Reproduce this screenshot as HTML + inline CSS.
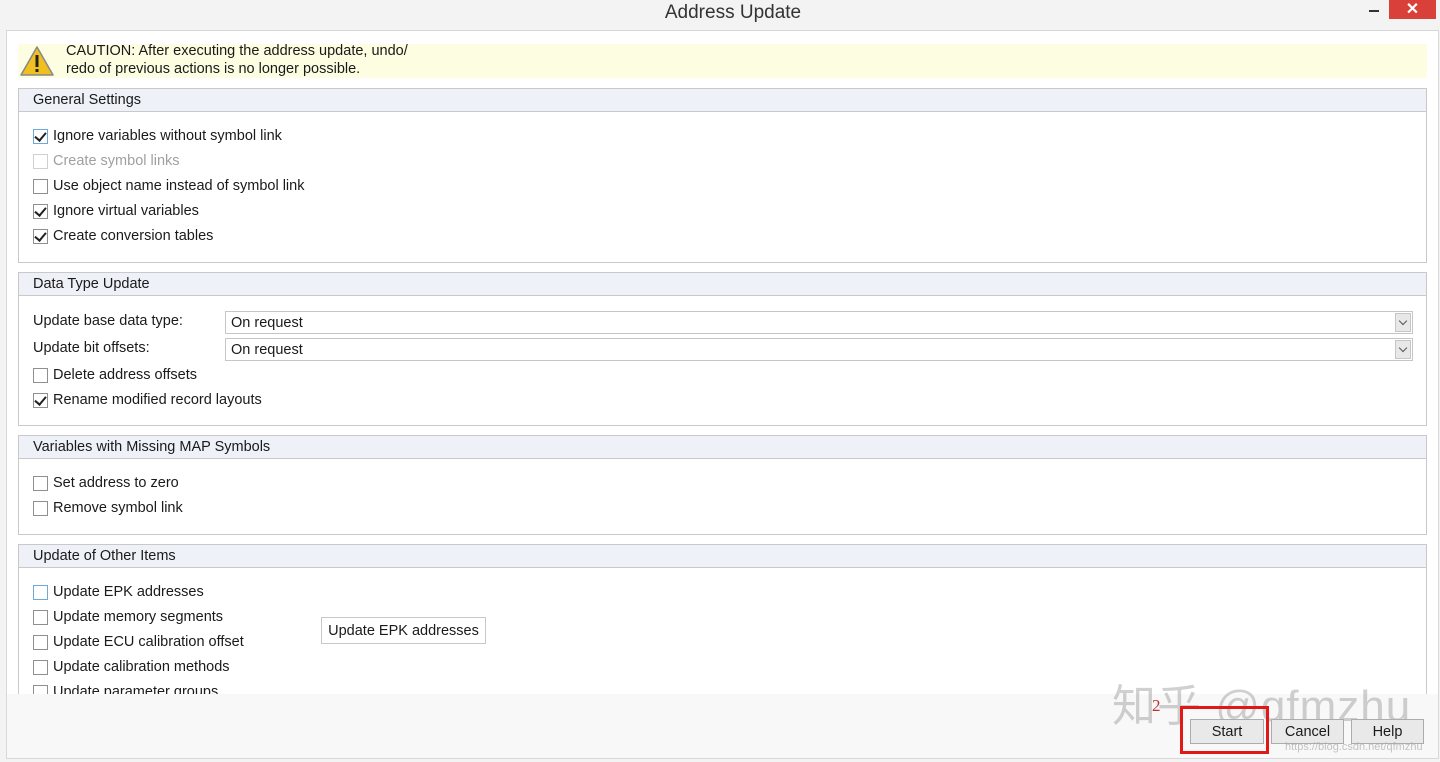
<!DOCTYPE html>
<html><head><style>
*{margin:0;padding:0;box-sizing:border-box}
body{width:1440px;height:762px;background:#f3f3f3;font-family:"Liberation Sans","Noto Sans CJK SC",sans-serif;font-size:14.5px;color:#1a1a1a;position:relative;overflow:hidden}
.a{position:absolute}
.title{left:0;width:1466px;top:2px;text-align:center;font-size:19px;color:#333}
.close{left:1389px;top:0;width:47px;height:19px;background:#d9403a;color:#fff;text-align:center;font-size:16px;line-height:19px;font-weight:bold}
.min{left:1369px;top:10px;width:10px;height:2px;background:#333}
.panel{left:6px;top:30px;width:1433px;height:729px;background:#fff;border:1px solid #d8d8d8}
.caution{left:18px;top:44px;width:1409px;height:34px;background:#fdfde2}
.grp{position:absolute;left:18px;width:1409px;border:1px solid #c9c9c9;background:#fff}
.gh{height:23px;background:#eef2f8;border-bottom:1px solid #c9c9c9;padding-left:14px;line-height:23px}
.cb{position:absolute;left:33px;width:15px;height:15px;border:1px solid #8f8f8f;background:#fff}
.cb.dis{border-color:#d0d0d0}
.cb.foc{border-color:#6fa8d6}
.lbl{position:absolute;left:53px;line-height:18px}
.chk::after{content:"";position:absolute;left:3px;top:0px;width:5px;height:9px;border:solid #222;border-width:0 2px 2px 0;transform:rotate(40deg)}
.sel{position:absolute;left:225px;width:1188px;height:23px;border:1px solid #c6c6c6;background:#fff;padding-left:5px;line-height:22px}
.sel .ar{position:absolute;right:1px;top:1px;width:16px;height:19px;background:#e8e8e8;border:1px solid #c6c6c6}
.sel .ar::after{content:"";position:absolute;left:4px;top:4px;width:5px;height:5px;border:solid #555;border-width:0 1.5px 1.5px 0;transform:rotate(45deg)}
.btn{position:absolute;height:25px;border:1px solid #acacac;background:#e9e9e9;text-align:center;line-height:24px}
.bottom{left:7px;top:694px;width:1431px;height:64px;background:#f8f8f8}
</style></head><body>
<div class="a title">Address Update</div>
<div class="a min"></div>
<div class="a close">✕</div>
<div class="a panel"></div>
<div class="a caution"></div>
<svg class="a" style="left:19px;top:44px" width="36" height="34" viewBox="0 0 36 34"><path d="M18 3 L34 31 L2 31 Z" fill="#f0c020" stroke="#888" stroke-width="1.5" stroke-linejoin="round"/><rect x="16.5" y="11" width="3" height="12" fill="#222"/><rect x="16.5" y="25" width="3" height="3" fill="#222"/></svg>
<div class="a" style="left:66px;top:42px;line-height:18px">CAUTION: After executing the address update, undo/<br>redo of previous actions is no longer possible.</div>

<div class="grp" style="top:88px;height:175px"><div class="gh">General Settings</div></div>
<div class="cb chk foc" style="top:129px"></div><div class="lbl" style="top:127px">Ignore variables without symbol link</div>
<div class="cb dis" style="top:154px"></div><div class="lbl" style="top:152px;color:#a0a0a0">Create symbol links</div>
<div class="cb" style="top:179px"></div><div class="lbl" style="top:177px">Use object name instead of symbol link</div>
<div class="cb chk" style="top:204px"></div><div class="lbl" style="top:202px">Ignore virtual variables</div>
<div class="cb chk" style="top:229px"></div><div class="lbl" style="top:227px">Create conversion tables</div>

<div class="grp" style="top:272px;height:154px"><div class="gh">Data Type Update</div></div>
<div class="lbl" style="left:33px;top:312px">Update base data type:</div>
<div class="sel" style="top:311px">On request<div class="ar"></div></div>
<div class="lbl" style="left:33px;top:339px">Update bit offsets:</div>
<div class="sel" style="top:338px">On request<div class="ar"></div></div>
<div class="cb" style="top:368px"></div><div class="lbl" style="top:366px">Delete address offsets</div>
<div class="cb chk" style="top:393px"></div><div class="lbl" style="top:391px">Rename modified record layouts</div>

<div class="grp" style="top:435px;height:100px"><div class="gh">Variables with Missing MAP Symbols</div></div>
<div class="cb" style="top:476px"></div><div class="lbl" style="top:474px">Set address to zero</div>
<div class="cb" style="top:501px"></div><div class="lbl" style="top:499px">Remove symbol link</div>

<div class="grp" style="top:544px;height:160px;border-bottom:none"><div class="gh">Update of Other Items</div></div>
<div class="cb foc" style="top:585px"></div><div class="lbl" style="top:583px">Update EPK addresses</div>
<div class="cb" style="top:610px"></div><div class="lbl" style="top:608px">Update memory segments</div>
<div class="cb" style="top:635px"></div><div class="lbl" style="top:633px">Update ECU calibration offset</div>
<div class="cb" style="top:660px"></div><div class="lbl" style="top:658px">Update calibration methods</div>
<div class="cb" style="top:685px"></div><div class="lbl" style="top:683px">Update parameter groups</div>
<div class="btn" style="left:321px;top:617px;width:165px;height:27px;background:#fff;line-height:26px;border-color:#c8c8c8">Update EPK addresses</div>

<div class="a bottom"></div>
<div class="a" style="left:1112px;top:670px;font-size:44px;color:rgba(150,150,150,0.45);letter-spacing:1px;white-space:nowrap">知乎 @qfmzhu</div>
<div class="a" style="left:1152px;top:696px;color:#c03030;font-family:'Liberation Serif',serif;font-size:17px">2</div>
<div class="btn" style="left:1190px;top:719px;width:74px">Start</div>
<div class="btn" style="left:1271px;top:719px;width:73px">Cancel</div>
<div class="btn" style="left:1351px;top:719px;width:73px">Help</div>
<div class="a" style="left:1180px;top:706px;width:89px;height:48px;border:3px solid #e01818"></div>
<div class="a" style="left:1285px;top:741px;font-size:11px;color:rgba(170,170,170,0.7)">https://blog.csdn.net/qfmzhu</div>
</body></html>
